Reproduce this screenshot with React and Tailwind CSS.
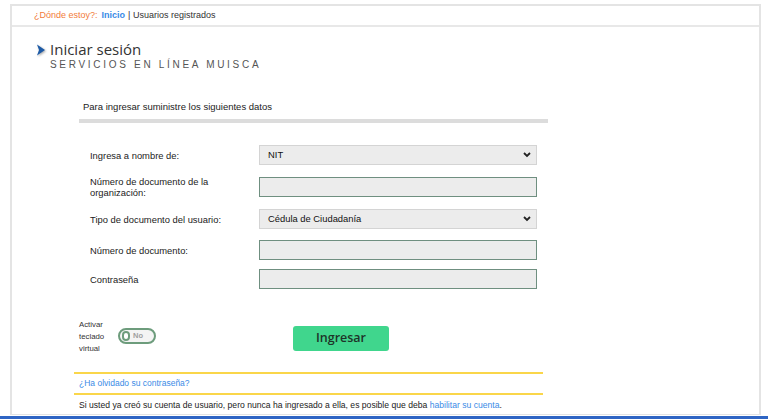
import React from 'react';

function FormRow({ label, children, className = '' }) {
  return (
    <div className={`flex h-[20px] items-center ${className}`}>
      <div className="w-[180px] pl-[11px] text-[9.4px] leading-[11px] text-[#222]">{label}</div>
      {children}
    </div>
  );
}

function SelectBox({ value }) {
  return (
    <div className="flex h-[20px] w-[278px] items-center justify-between border border-[#d4d4d4] bg-[#ececec] pl-[8px] pr-[5px] text-[9.4px] text-[#111]">
      <span>{value}</span>
      <svg width="8" height="6" viewBox="0 0 8 6">
        <path d="M1 1l3 3 3-3" fill="none" stroke="#222" strokeWidth="1.8" />
      </svg>
    </div>
  );
}

function TextBox() {
  return <div className="h-[20px] w-[278px] border border-[#6f8f80] bg-[#ececec]" />;
}

export default function App() {
  return (
    <div className="flex h-[419px] w-[768px] flex-col overflow-hidden bg-white font-['Liberation_Sans',Arial,sans-serif]">
      <div className="ml-[10px] mt-[4px] flex h-[411px] w-[751px] shrink-0 flex-col border-x-2 border-t-2 border-b border-[#e4e4e4]">
        {/* breadcrumb */}
        <div className="flex h-[21px] shrink-0 items-center border-b-2 border-[#e8e8e8] pl-[22px] text-[9px]">
          <span className="text-[#f27c3a]">¿Dónde estoy?:</span>
          <span className="ml-[4px] font-bold text-[#3a8be6]">Inicio</span>
          <span className="ml-[3px] text-[#333]">| Usuarios registrados</span>
        </div>

        {/* title */}
        <div className="ml-[24px] mt-[12px] flex h-[20px] items-center">
          <svg width="10" height="12" viewBox="0 0 10 12" className="mt-[2px] drop-shadow-[1px_1px_1px_rgba(0,0,0,0.35)]">
            <path d="M1 0.5L9 6L1 11.5L3 6Z" fill="#1d5aa6" />
          </svg>
          <span className="ml-[4px] text-[15px] leading-[20px] text-[#333] font-['Open_Sans',sans-serif]">Iniciar sesión</span>
        </div>
        <div className="ml-[38px] text-[10px] leading-[12px] tracking-[2.7px] text-[#555]">SERVICIOS EN LÍNEA MUISCA</div>

        {/* form */}
        <div className="ml-[67px] mt-[29px] w-[469px]">
          <div className="pl-[4px] text-[9.5px] leading-[14px] text-[#222]">Para ingresar suministre los siguientes datos</div>
          <div className="mt-[5px] h-[4px] bg-[#dcdcdc]" />

          <FormRow label="Ingresa a nombre de:" className="mt-[22px]">
            <SelectBox value="NIT" />
          </FormRow>
          <FormRow label={<>Número de documento de la<br />organización:</>} className="mt-[12px]">
            <TextBox />
          </FormRow>
          <FormRow label="Tipo de documento del usuario:" className="mt-[12px]">
            <SelectBox value="Cédula de Ciudadanía" />
          </FormRow>
          <FormRow label="Número de documento:" className="mt-[11px]">
            <TextBox />
          </FormRow>
          <FormRow label="Contraseña" className="mt-[9px]">
            <TextBox />
          </FormRow>

          {/* keyboard toggle + submit */}
          <div className="mt-[30px] flex items-start">
            <div className="w-[39px] text-[7.8px] leading-[12px] text-[#333]">
              Activar<br />teclado<br />virtual
            </div>
            <div className="mt-[9px] flex h-[16px] w-[38px] items-center rounded-full border-2 border-[#6d9c7c] bg-[#f4f4f4] pl-[2px]">
              <div className="h-[10px] w-[8px] rounded-full border-2 border-[#6d9c7c] bg-white" />
              <span className="ml-[3px] text-[7.5px] font-bold text-[#a0a0a0]">No</span>
            </div>
            <div className="ml-[137px] mt-[7px] flex h-[25px] w-[96px] items-center justify-center rounded-[3px] bg-[#40d68d] text-[12.5px] font-semibold text-[#1e3328] font-['Open_Sans',sans-serif]">
              Ingresar
            </div>
          </div>
        </div>

        {/* help links */}
        <div className="ml-[62px] mt-[17px] w-[469px]">
          <div className="flex h-[23px] items-center border-y-2 border-[#fad64a] pl-[5px] text-[8.5px] text-[#3a8be6]">
            ¿Ha olvidado su contraseña?
          </div>
          <div className="flex h-[20px] items-center whitespace-nowrap pl-[5px] text-[8.6px] text-[#222]">
            Si usted ya creó su cuenta de usuario, pero nunca ha ingresado a ella, es posible que deba&nbsp;
            <span className="text-[#3a8be6]">habilitar su cuenta</span>.
          </div>
        </div>
      </div>
      <div className="mt-auto h-[3px] shrink-0 bg-[#2f65c4]" />
    </div>
  );
}
